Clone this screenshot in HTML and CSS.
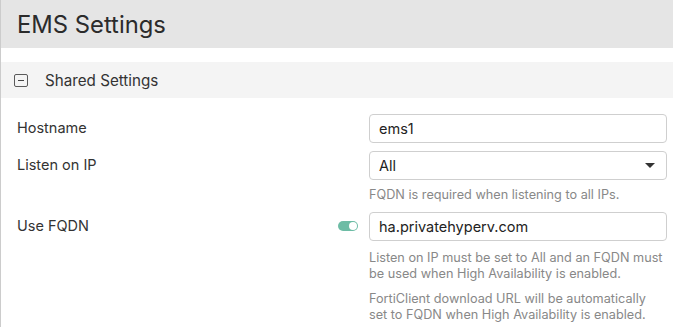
FILE: index.html
```html
<!DOCTYPE html>
<html>
<head>
<meta charset="utf-8">
<link rel="stylesheet" href="styles.css">
</head>
<body>
<div class="page">
  <div class="title-bar"><h1 class="title">EMS Settings</h1></div>
  <div class="section">
    <div class="section-head">
      <span class="collapse-icon"><span class="minus"></span></span>
      <span class="section-title">Shared Settings</span>
    </div>
    <div class="form">
      <div class="row">
        <div class="label">Hostname</div>
        <div class="control">
          <div class="input">ems1</div>
        </div>
      </div>
      <div class="row">
        <div class="label">Listen on IP</div>
        <div class="control">
          <div class="input select">All<span class="caret"></span></div>
          <p class="hint">FQDN is required when listening to all IPs.</p>
        </div>
      </div>
      <div class="row">
        <div class="label">Use FQDN</div>
        <div class="toggle"><span class="knob"></span></div>
        <div class="control">
          <div class="input">ha.privatehyperv.com</div>
          <p class="hint">Listen on IP must be set to All and an FQDN must be used when High Availability is enabled.</p>
          <p class="hint">FortiClient download URL will be automatically set to FQDN when High Availability is enabled.</p>
        </div>
      </div>
    </div>
  </div>
</div>
</body>
</html>
```
FILE: styles.css
```css
html, body {
  margin: 0;
  padding: 0;
  background: #fff;
  font-family: Inter, "Noto Sans", sans-serif;
  color: #333;
}
.page {
  border-left: 1px solid #cccccc;
  min-height: 327px;
  box-sizing: border-box;
}
.title-bar {
  background: #e5e5e5;
  height: 48px;
  display: flex;
  align-items: center;
  padding-left: 16px;
}
.title {
  margin: 0;
  font-size: 23.8px;
  font-weight: 400;
  color: #2b2b2b;
  padding-top: 1px;
}
.section {
  margin-top: 14px;
}
.section-head {
  background: #f4f4f4;
  height: 36px;
  display: flex;
  align-items: center;
  padding-left: 13px;
}
.collapse-icon {
  width: 12px;
  height: 11px;
  border: 1px solid #5a5a5a;
  border-radius: 2px;
  display: flex;
  align-items: center;
  justify-content: center;
  margin-right: 17px;
}
.minus {
  width: 6px;
  height: 1px;
  background: #444;
}
.section-title {
  font-size: 15.2px;
  color: #333;
}
.form {
  padding: 16px 6px 0 16px;
  display: flex;
  flex-direction: column;
  gap: 8px;
}
.row {
  display: flex;
  align-items: flex-start;
}
.label {
  flex: 1;
  font-size: 14.5px;
  line-height: 28px;
  color: #333;
}
.control {
  width: 298px;
}
.input {
  box-sizing: border-box;
  height: 29px;
  border: 1px solid #cfcfcf;
  border-radius: 4px;
  padding: 0 9px;
  font-size: 14.5px;
  line-height: 27px;
  color: #222;
  position: relative;
}
.select .caret {
  position: absolute;
  right: 11px;
  top: 11px;
  width: 0;
  height: 0;
  border-left: 5px solid transparent;
  border-right: 5px solid transparent;
  border-top: 5px solid #333;
}
.hint {
  margin: 7px 0 0;
  font-size: 12.7px;
  line-height: 16.5px;
  color: #888;
}
.control .input + .hint {
  margin-top: 7px;
}
.row:last-child .input + .hint {
  margin-top: 9px;
}
.hint + .hint {
  margin-top: 8px;
}
.toggle {
  width: 20px;
  height: 10px;
  border-radius: 5px;
  background: #6dbca5;
  margin: 9px 11px 0 0;
  position: relative;
}
.knob {
  position: absolute;
  right: 1px;
  top: 1px;
  width: 8px;
  height: 8px;
  border-radius: 50%;
  background: #fff;
}
```
